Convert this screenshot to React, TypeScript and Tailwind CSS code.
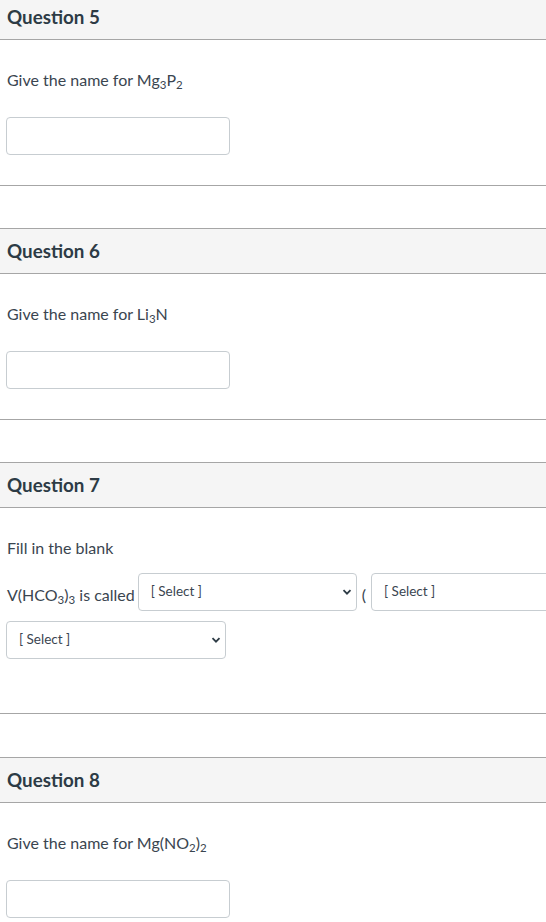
import React from 'react';

function Header({ title }: { title: string }) {
  return (
    <div className="h-[46px] flex items-center border-y border-[#a6a6a6] bg-[#f5f5f5] px-[7px]">
      <h2 className="text-[18.8px] font-bold text-[#2d3b45] leading-none">{title}</h2>
    </div>
  );
}

function Sub({ children }: { children: React.ReactNode }) {
  return <sub className="text-[11.5px] -bottom-[3px]">{children}</sub>;
}

function TextInput() {
  return (
    <input
      type="text"
      className="block w-[224px] h-[38px] ml-[6px] border border-[#c7cdd1] rounded-[4px] bg-white"
    />
  );
}

function SelectBox({ width }: { width: string }) {
  return (
    <div className={`${width} h-[38px] shrink-0 flex items-center justify-between border border-[#c7cdd1] rounded-[4px] bg-white pl-[12px] pr-[4px]`}>
      <span className="text-[13.5px] text-[#3a4550] -mt-[2px]">[ Select ]</span>
      <svg width="10" height="10" viewBox="0 0 10 10" className="text-[#2d3b45]">
        <path d="M1.5 3.2 L5 6.7 L8.5 3.2" fill="none" stroke="currentColor" strokeWidth="1.8" />
      </svg>
    </div>
  );
}

function SimpleQuestion({ title, prompt, top }: { title: string; prompt: React.ReactNode; top: string }) {
  return (
    <div className={top}>
      <Header title={title} />
      <div className="pt-[27px] pb-[30px] border-b border-[#a6a6a6]">
        <p className="px-[7px] text-[16px] leading-[26px] text-[#3a4550]">{prompt}</p>
        <div className="mt-[24px]">
          <TextInput />
        </div>
      </div>
    </div>
  );
}

export default function App() {
  return (
    <div className="w-[546px] overflow-hidden bg-white" style={{ fontFamily: 'Lato, "Open Sans", sans-serif' }}>
      <SimpleQuestion
        top="-mt-[6px]"
        title="Question 5"
        prompt={<>Give the name for Mg<Sub>3</Sub>P<Sub>2</Sub></>}
      />
      <SimpleQuestion
        top="mt-[42px]"
        title="Question 6"
        prompt={<>Give the name for Li<Sub>3</Sub>N</>}
      />

      <div className="mt-[42px]">
        <Header title="Question 7" />
        <div className="pt-[27px] pb-[54px] border-b border-[#a6a6a6]">
          <p className="px-[7px] text-[16px] leading-[26px] text-[#3a4550]">Fill in the blank</p>
          <div className="mt-[12px] flex items-center pl-[7px] whitespace-nowrap text-[16px] text-[#3a4550]">
            <span className="mt-[6px]">V(HCO<Sub>3</Sub>)<Sub>3</Sub> is called</span>
            <div className="ml-[3px]">
              <SelectBox width="w-[219px]" />
            </div>
            <span className="ml-[5px] mr-[5px] mt-[6px]">(</span>
            <SelectBox width="w-[219px]" />
          </div>
          <div className="mt-[10px] pl-[6px]">
            <SelectBox width="w-[220px]" />
          </div>
        </div>
      </div>

      <SimpleQuestion
        top="mt-[43px]"
        title="Question 8"
        prompt={<>Give the name for Mg(NO<Sub>2</Sub>)<Sub>2</Sub></>}
      />
    </div>
  );
}
